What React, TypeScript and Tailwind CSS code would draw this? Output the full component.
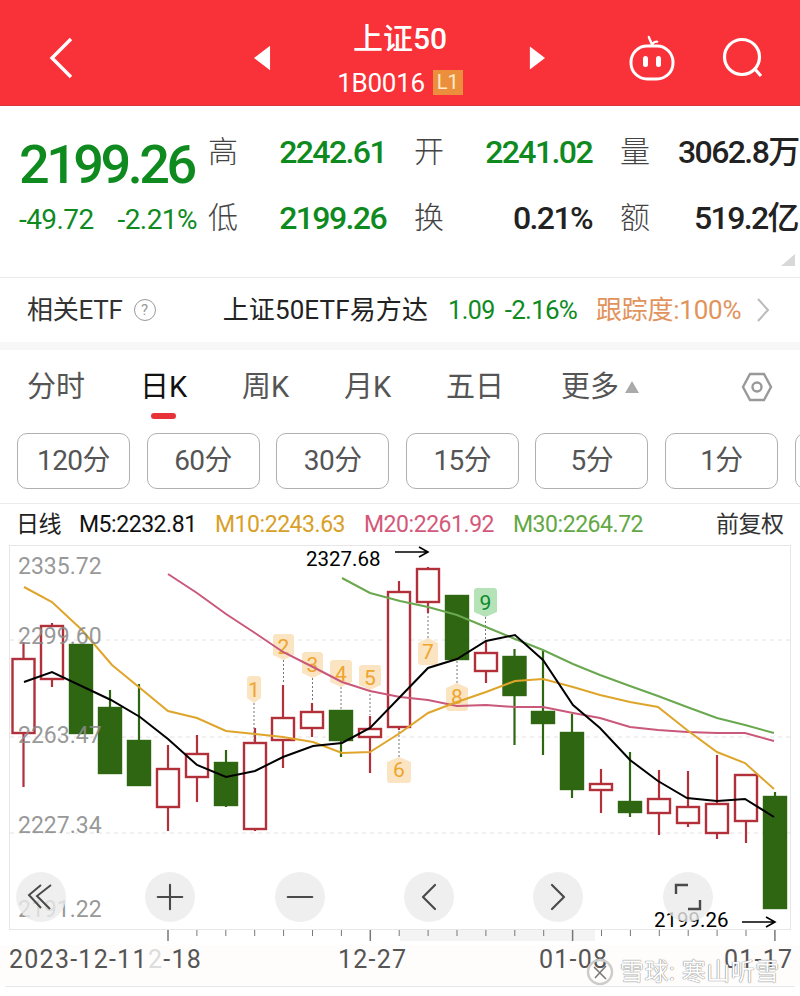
import { ChevronLeft, ChevronRight, Minus, Plus } from 'lucide-react';

type Candle = [number, number, number, number, number, 'r' | 'g'];

// x, wick top, wick bottom, body top, body bottom, colour
const candles: Candle[] = [
  [23.5, 642, 787, 659, 733, 'r'],
  [52, 623, 687, 626, 679, 'r'],
  [81, 645, 733, 645, 733, 'g'],
  [110, 690, 774, 708, 773, 'g'],
  [139, 684, 786, 741, 785, 'g'],
  [168, 745, 831, 769, 807, 'r'],
  [197, 735, 802, 754, 777, 'r'],
  [226, 750, 807, 763, 805, 'g'],
  [255, 728, 831, 743, 829, 'r'],
  [283, 685, 768, 718, 740, 'r'],
  [312, 703, 737, 712, 728, 'r'],
  [341, 711, 757, 711, 740, 'g'],
  [370, 716, 773, 729, 737, 'r'],
  [399, 581, 730, 592, 727, 'r'],
  [428, 567, 613, 569, 602, 'r'],
  [457, 596, 659, 596, 659, 'g'],
  [486, 642, 683, 653, 671, 'r'],
  [514.5, 649, 745, 657, 695, 'g'],
  [543, 651, 755, 712, 723, 'g'],
  [572, 714, 798, 733, 789, 'g'],
  [601, 769, 813, 784, 790, 'r'],
  [630, 752, 817, 802, 812, 'g'],
  [659, 770, 835, 799, 813, 'r'],
  [688, 771, 827, 807, 823, 'r'],
  [717, 755, 839, 804, 833, 'r'],
  [746, 775, 843, 775, 821, 'r'],
  [775, 792, 908, 797, 908, 'g'],
];

const m5 = '24,682 52,672 111,700 140,717 168,739 197,765 226,777 255,771 283,757 313,746 342,743 370,728 400,697 428,668 457,659 486,641 515,635 543,660 573,705 600,728 630,760 658,781 687,798 717,801 745,799 774,817';
const m10 = '24,587 52,602 82,630 112,665 140,688 168,711 197,718 226,731 255,734 283,737 313,742 342,753 370,752 400,733 428,713 457,702 486,692 515,681 543,679 573,687 600,695 630,702 658,707 687,730 717,752 745,763 774,789';
const m20 = '168,574 197,593 226,614 255,633 283,652 313,667 342,682 370,691 400,697 428,700 457,706 486,705 515,707 543,707 573,713 600,718 630,727 658,730 687,732 717,733 745,733 774,741';
const m30 = '342,578 370,593 400,601 428,607 457,615 486,627 515,639 543,650 573,664 600,675 630,686 658,696 687,707 717,718 745,725 774,733';

// label, left, right, top, bottom, tip direction, connector end
const markers: [string, number, number, number, number, 'down' | 'up', number][] = [
  ['1', 247, 261, 676, 703, 'down', 742],
  ['2', 273, 294, 634, 660, 'down', 684],
  ['3', 302, 323, 652, 678, 'down', 702],
  ['4', 330, 352, 660, 687, 'down', 710],
  ['5', 359, 381, 665, 690, 'down', 715],
  ['6', 387, 411, 757, 783, 'up', 730],
  ['7', 418, 438, 638, 665, 'up', 613],
  ['8', 446, 468, 683, 711, 'up', 659],
  ['9', 474, 497, 588, 617, 'down', 642],
];

const axisLabels: [string, number][] = [
  ['2335.72', 574],
  ['2299.60', 644],
  ['2263.47', 743],
  ['2227.34', 833],
  ['2191.22', 917],
];

const ticks = Array.from({ length: 22 }, (_, i) => 168 + i * 28.9);

const CandleChart = () => (
  <svg viewBox="0 540 800 405" className="block w-full h-[405px]">
    <rect x="9.5" y="545.5" width="781" height="384" fill="#fff" stroke="#e6e6e6" />
    {[640, 737, 833].map((y) => (
      <line key={y} x1="10" x2="790" y1={y} y2={y} stroke="#e2e2e2" strokeDasharray="4 4" />
    ))}
    <rect x="400" y="930" width="195" height="11" fill="#f4f4f4" />
    {ticks.map((x, i) => (
      <line key={i} x1={x} x2={x} y1="930" y2={i % 7 === 0 ? 941 : 936} stroke="#777" strokeWidth={i % 7 === 0 ? 1.5 : 1} />
    ))}

    {candles.map(([x, wt, wb, bt, bb, c], i) => {
      const color = c === 'r' ? '#b2303a' : '#2f6612';
      return (
        <g key={i}>
          <line x1={x} x2={x} y1={wt} y2={wb} stroke={color} strokeWidth="2.2" />
          <rect
            x={x - 11}
            y={bt}
            width="22"
            height={bb - bt}
            fill={c === 'r' ? '#fff' : color}
            stroke={color}
            strokeWidth="2.4"
          />
        </g>
      );
    })}

    {markers.map(([t, l, r, top, bot, dir, end]) => {
      const mid = (l + r) / 2;
      const shape =
        dir === 'down'
          ? `${l},${top + 2} ${l + 2},${top} ${r - 2},${top} ${r},${top + 2} ${r},${bot - 5} ${mid},${bot} ${l},${bot - 5}`
          : `${l},${top + 5} ${mid},${top} ${r},${top + 5} ${r},${bot - 2} ${r - 2},${bot} ${l + 2},${bot} ${l},${bot - 2}`;
      const nine = t === '9';
      return (
        <g key={t}>
          <line
            x1={mid}
            x2={mid}
            y1={dir === 'down' ? bot : top}
            y2={end}
            stroke="#777"
            strokeDasharray="2 2"
          />
          <polygon points={shape} fill={nine ? '#b6e2b8' : '#fbe4c2'} />
          <text
            x={mid}
            y={(top + bot) / 2 + 7}
            textAnchor="middle"
            fontSize="21"
            fill={nine ? '#0b8a2c' : '#eda52d'}
            fontFamily="Roboto, sans-serif"
          >
            {t}
          </text>
        </g>
      );
    })}

    <polyline points={m30} fill="none" stroke="#6aa84f" strokeWidth="2" />
    <polyline points={m20} fill="none" stroke="#c9587a" strokeWidth="2" />
    <polyline points={m10} fill="none" stroke="#dfa52b" strokeWidth="2" />
    <polyline points={m5} fill="none" stroke="#000" strokeWidth="2" />

    {axisLabels.map(([t, y]) => (
      <text key={t} x="18" y={y} fontSize="23" fill="#8b8b8b" fillOpacity="0.9" fontFamily="Roboto, sans-serif">
        {t}
      </text>
    ))}

    <text x="306" y="566" fontSize="20.5" fill="#000" fontFamily="Roboto, sans-serif">2327.68</text>
    <path d="M395 552H427M419 547l9 5-9 5" fill="none" stroke="#000" strokeWidth="1.6" />
    <text x="654" y="927" fontSize="20.5" fill="#000" fontFamily="Roboto, sans-serif">2199.26</text>
    <path d="M742 922H774M766 917l9 5-9 5" fill="none" stroke="#000" strokeWidth="1.6" />
  </svg>
);

const tabs = ['分时', '日K', '周K', '月K', '五日'];
const chips = ['120分', '60分', '30分', '15分', '5分', '1分'];

const greenNum = 'text-[#0e8a1f]';

const Pair = ({ label, value, color }: { label: string; value: string; color: string }) => (
  <>
    <span className="text-[30px] leading-[32px] text-[#444] font-light">{label}</span>
    <span className={`text-[32px] leading-[32px] font-medium tracking-[-0.05em] text-right whitespace-nowrap ${color}`}>{value}</span>
  </>
);

const RoundButton = ({ left, children }: { left: string; children: React.ReactNode }) => (
  <div className={`absolute top-[872px] ${left} w-[50px] h-[50px] rounded-full bg-[#ebebeb]/80 flex items-center justify-center text-[#4a4a4a]`}>
    {children}
  </div>
);

export default function App() {
  return (
    <div className="relative w-[800px] h-[996px] overflow-hidden bg-white [font-family:Roboto,'Noto_Sans_CJK_SC',sans-serif]">
      {/* Red header */}
      <header className="h-[106px] pt-[10px] bg-[#f93138] border-b border-[#d9363b] flex items-center text-white">
        <svg width="24" height="42" viewBox="0 0 24 42" className="ml-[49px]" fill="none" stroke="#fff" strokeWidth="3.4">
          <path d="M22 2 3 21l19 19" />
        </svg>
        <svg width="17" height="26" viewBox="0 0 18 26" className="ml-[181px]" fill="#fff">
          <path d="M17 0v26L0 13z" />
        </svg>
        <div className="w-[258px] pt-[6px] flex flex-col items-center">
          <div className="text-[30px] leading-none font-medium mt-[-2px]">上证50</div>
          <div className="flex items-center mt-[16px] h-[26px]">
            <span className="text-[26px] leading-none tracking-[-0.01em]">1B0016</span>
            <span className="ml-[8px] w-[30px] h-[25px] bg-[#ec8f3c] text-[#ffe9c9] text-[20px] leading-[25px] text-center">L1</span>
          </div>
        </div>
        <svg width="16" height="26" viewBox="0 0 18 26" fill="#fff">
          <path d="M1 0v26l17-13z" />
        </svg>
        {/* Robot mascot */}
        <svg width="48" height="46" viewBox="0 0 48 46" className="ml-[83px]" fill="none" stroke="#fff" strokeWidth="3">
          <path d="M24 10C23 5 20 3 21 1M24 10c1-3 4-4 6-3" strokeWidth="2.4" />
          <rect x="3" y="11" width="42" height="33" rx="16" />
          <rect x="15" y="21" width="5" height="11" rx="2.5" fill="#fff" stroke="none" />
          <rect x="28" y="21" width="5" height="11" rx="2.5" fill="#fff" stroke="none" />
        </svg>
        <svg width="44" height="42" viewBox="0 0 44 42" className="ml-[46px]" fill="none" stroke="#fff" strokeWidth="3.2">
          <circle cx="20" cy="20" r="17.5" />
          <path d="m32 31 7 8" />
        </svg>
      </header>

      {/* Quote block */}
      <section className="relative h-[172px] border-b border-[#ececec] flex pt-[30px]">
        <div className="w-[208px] pl-[19px] shrink-0">
          <div className={`text-[54px] leading-none font-medium tracking-[-0.065em] mt-[2px] ${greenNum}`}>2199.26</div>
          <div className={`flex justify-between w-[178px] mt-[14px] text-[28px] leading-none tracking-[-0.02em] ${greenNum}`}>
            <span>-49.72</span>
            <span>-2.21%</span>
          </div>
        </div>
        <div className="grid grid-cols-[30px_120px_30px_120px_30px_120px] gap-x-[28px] gap-y-[34px] self-start items-center">
          <Pair label="高" value="2242.61" color={greenNum} />
          <Pair label="开" value="2241.02" color={greenNum} />
          <Pair label="量" value="3062.8万" color="text-[#222]" />
          <Pair label="低" value="2199.26" color={greenNum} />
          <Pair label="换" value="0.21%" color="text-[#222]" />
          <Pair label="额" value="519.2亿" color="text-[#222]" />
        </div>
        <svg width="14" height="12" viewBox="0 0 14 12" className="absolute right-[5px] top-[148px]" fill="#d8d8d8">
          <path d="M14 0v12H0z" />
        </svg>
      </section>

      {/* Related ETF row */}
      <section className="h-[64px] flex items-center pl-[27px] text-[26px] leading-none">
        <span className="text-[#333] tracking-[-0.01em]">相关ETF</span>
        <span className="ml-[11px] w-[22px] h-[22px] rounded-full border border-[#999] text-[#999] text-[15px] flex items-center justify-center">?</span>
        <span className="ml-[67px] text-[#222] tracking-[0.005em]">上证50ETF易方达</span>
        <span className={`ml-[20px] text-[25px] tracking-[-0.02em] ${greenNum}`}>1.09</span>
        <span className={`ml-[10px] tracking-[-0.03em] ${greenNum}`}>-2.16%</span>
        <span className="ml-[19px] text-[#e2935c] tracking-[-0.01em]">跟踪度:100%</span>
        <svg width="14" height="26" viewBox="0 0 14 26" className="ml-[15px]" fill="none" stroke="#bbb" strokeWidth="2">
          <path d="m2 2 10 11L2 24" />
        </svg>
      </section>
      <div className="h-[8px] bg-[#f7f7f7]" />

      {/* Period tabs */}
      <nav className="relative h-[83px] flex items-start pt-[21px] pl-[27px] text-[29px] leading-[32px] text-[#555]">
        {tabs.map((t, i) => (
          <span key={t} className={`${i === 1 ? 'text-[#111]' : ''} ${i === 0 ? 'w-[113px]' : 'w-[102px]'}`}>{t}</span>
        ))}
        <span className="ml-[13px]">更多</span>
        <svg width="14" height="12" viewBox="0 0 14 12" className="ml-[6px] mt-[10px]" fill="#aaa">
          <path d="M7 0l7 12H0z" />
        </svg>
        <svg width="32" height="32" viewBox="0 0 32 32" className="ml-[102px]" fill="none" stroke="#999" strokeWidth="2.4">
          <path d="M9 3h14l7 13-7 13H9L2 16z" />
          <circle cx="16" cy="16" r="4.5" />
        </svg>
        <div className="absolute left-[151px] top-[63px] w-[25px] h-[6px] rounded-full bg-[#e8323a]" />
      </nav>

      {/* Interval chips */}
      <div className="flex gap-[16.6px] pl-[17px] w-[920px]">
        {chips.map((c) => (
          <div key={c} className="w-[113px] h-[56px] shrink-0 rounded-[10px] border border-[#b0b0b0] flex items-center justify-center text-[28px] text-[#555] tracking-[-0.02em]">
            {c}
          </div>
        ))}
        <div className="w-[113px] h-[56px] shrink-0 rounded-[10px] border border-[#b0b0b0]" />
      </div>

      {/* MA legend */}
      <div className="mt-[14px] border-t border-[#ececec] h-[39px] flex items-center pl-[16px] pt-[2px] text-[23px] leading-none tracking-[-0.02em]">
        <span className="text-[#222] w-[63px]">日线</span>
        <span className="text-[#111] w-[136px]">M5:2232.81</span>
        <span className="text-[#d9a028] w-[149px]">M10:2243.63</span>
        <span className="text-[#d4587a] w-[149px]">M20:2261.92</span>
        <span className="text-[#63a844] w-[203px]">M30:2264.72</span>
        <span className="text-[#333]">前复权</span>
      </div>

      {/* Chart */}
      <div className="mt-[-2px]">
        <CandleChart />
      </div>

      {/* Zoom and pan buttons */}
      <RoundButton left="left-[16px]">
        <svg width="28" height="28" viewBox="0 0 28 28" fill="none" stroke="#4a4a4a" strokeWidth="2">
          <path d="M14 2 2 12l12 13M24 2 10 13l13 13" />
        </svg>
      </RoundButton>
      <RoundButton left="left-[145px]"><Plus size={42} strokeWidth={1.2} /></RoundButton>
      <RoundButton left="left-[275px]"><Minus size={42} strokeWidth={1.2} /></RoundButton>
      <RoundButton left="left-[404px]"><ChevronLeft size={48} strokeWidth={1.1} /></RoundButton>
      <RoundButton left="left-[533px]"><ChevronRight size={48} strokeWidth={1.1} /></RoundButton>
      <RoundButton left="left-[663px]">
        <svg width="28" height="28" viewBox="0 0 28 28" fill="none" stroke="#4a4a4a" strokeWidth="2.4">
          <path d="M2 11V2h12M26 17v9H14" />
        </svg>
      </RoundButton>

      {/* Date axis */}
      <div className="relative h-[41px] bg-[#fffcfc] text-[25px] leading-none text-[#555] tracking-[0.05em]">
        <span className="absolute left-[9px] top-[2px]">2023-12-11</span>
        <span className="absolute left-[148px] top-[2px]"><span className="text-[#ddd]">2</span>-18</span>
        <span className="absolute left-[338px] top-[2px]">12-27</span>
        <span className="absolute left-[539px] top-[2px]">01-08</span>
        <span className="absolute left-[724px] top-[2px]">01-17</span>
        {/* Watermark */}
        <div className="absolute left-[586px] top-[13px] flex items-center gap-[6px] text-[24px] text-white [text-shadow:0_0_1px_#777,0_0_1px_#777] tracking-[0.02em]">
          <svg width="28" height="28" viewBox="0 0 28 28" fill="none" stroke="#ccc" strokeWidth="2.5">
            <circle cx="14" cy="14" r="12" />
            <path d="M8 9l12 12M20 8 9 20" stroke="#777" strokeWidth="1.5" />
          </svg>
          <span>雪球: 寒山听雪</span>
        </div>
      </div>
      <div className="mx-[5px] border-t border-[#e8e8e8]" />
    </div>
  );
}
